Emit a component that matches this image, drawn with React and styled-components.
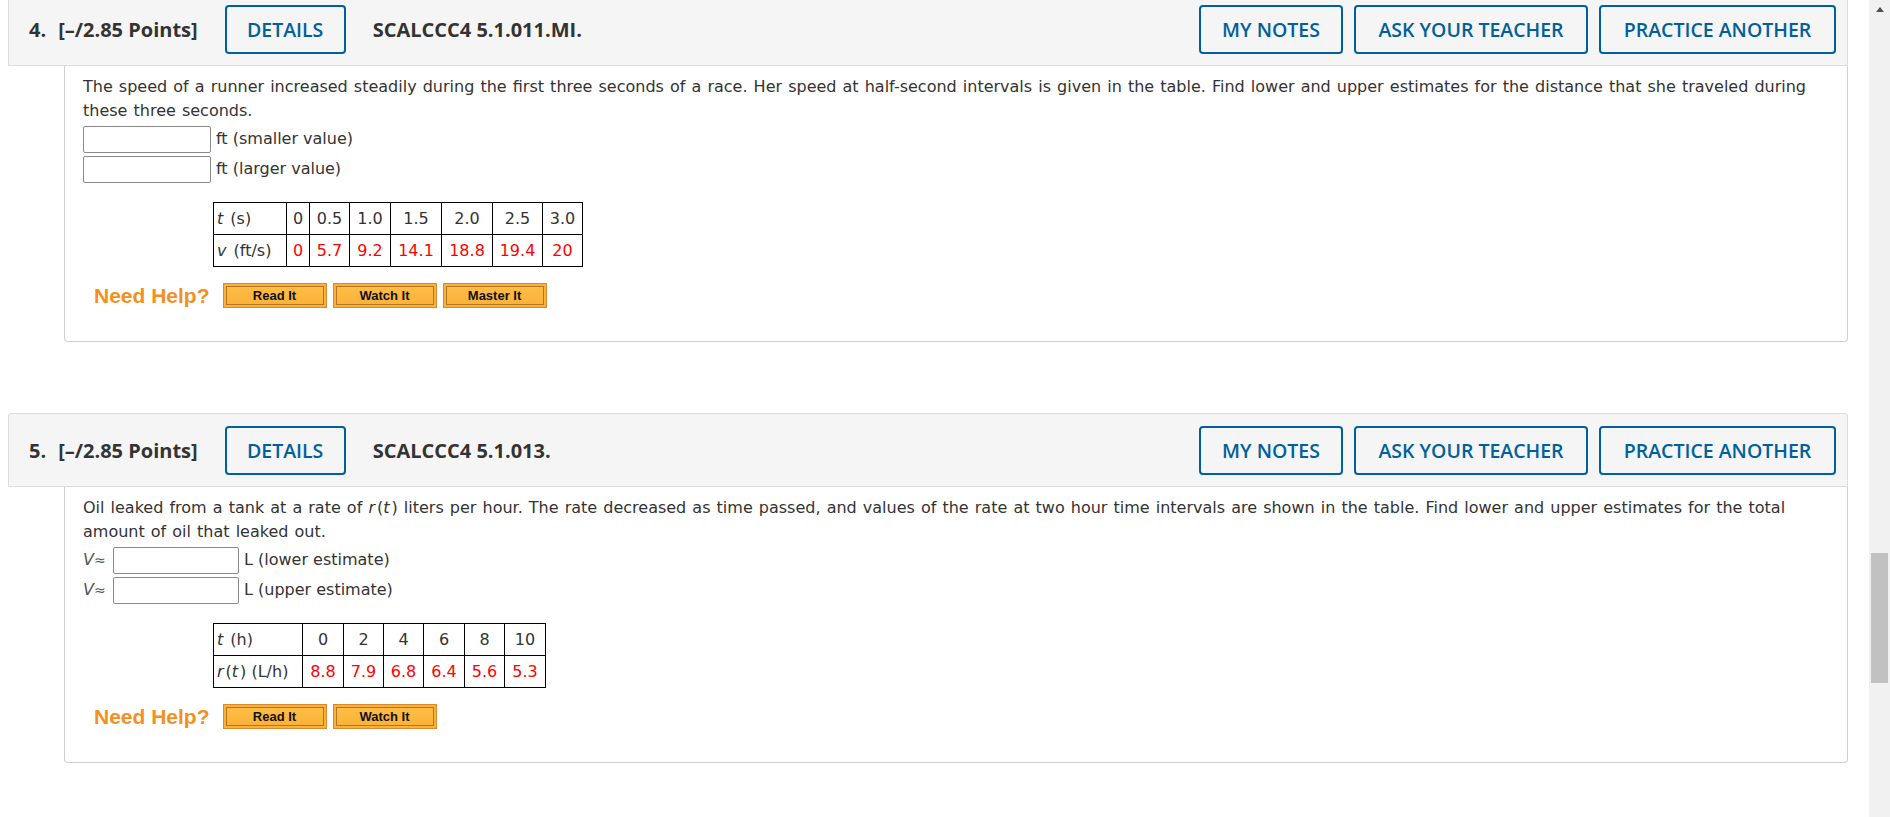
import React from 'react';
import styled, { createGlobalStyle } from 'styled-components';

const GlobalStyle = createGlobalStyle`
  html, body {
    margin: 0;
    padding: 0;
    background: #fff;
    overflow: hidden;
  }
`;

const Viewport = styled.div`
  display: flex;
  height: 100vh;
  overflow: hidden;
`;

const Main = styled.div`
  flex: 1;
  padding: 0 21px 0 8px;
  margin-top: -8px;
`;

const Question = styled.section`
  margin-bottom: 71px;
`;

const Header = styled.div`
  display: flex;
  align-items: center;
  height: 74px;
  box-sizing: border-box;
  padding: 0 11px 0 20px;
  background: #f5f5f5;
  border: 1px solid #dcdcdc;
  border-radius: 3px 3px 0 0;
  font-family: "Open Sans", sans-serif;
  color: #333;
`;

const Title = styled.span`
  font-size: 20px;
  font-weight: 700;
  margin-left: ${p => p.$gap || 0}px;
`;

const Actions = styled.div`
  display: flex;
  gap: 11px;
  margin-left: auto;
`;

const OutlineButton = styled.button`
  width: ${p => p.$w}px;
  height: 49px;
  box-sizing: border-box;
  padding: 0;
  margin: 0 ${p => p.$side ? '27px' : '0'};
  background: #f5f5f5;
  border: 2px solid #00609c;
  border-radius: 4px;
  color: #00609c;
  font-family: "Open Sans", sans-serif;
  font-size: 19.5px;
  font-weight: 600;
  white-space: nowrap;
  cursor: pointer;
`;

const Body = styled.div`
  margin-left: 56px;
  border: 1px solid #cfcfcf;
  border-top: none;
  border-radius: 0 0 4px 4px;
  padding: 9px 18px 33px;
  font-family: "DejaVu Sans", Verdana, sans-serif;
  font-size: 16px;
  line-height: 24px;
  word-spacing: 1px;
  color: #333;
`;

const Prompt = styled.p`
  margin: 0 0 1px;
`;

const Var = styled.i`
  margin-right: 2px;
`;

const AnswerRow = styled.div`
  display: flex;
  align-items: center;
  height: 30px;
  word-spacing: 0;
`;

const Prefix = styled.span`
  width: 30px;
  font-size: 14px;
  color: #555;
  i {
    font-size: 16px;
  }
`;

const AnswerBox = styled.input`
  width: ${p => p.$w || 128}px;
  height: 27px;
  box-sizing: border-box;
  border: 1px solid #8a8a8a;
  border-radius: 2px;
  margin: 0 5px 0 0;
  padding: 0;
`;

const DataTable = styled.table`
  border-collapse: collapse;
  table-layout: fixed;
  margin: 18px 0 0 130px;
  font-size: 16px;
`;

const Cell = styled.td`
  border: 1px solid #000;
  height: 32px;
  padding: 0 3px;
  box-sizing: border-box;
  text-align: ${p => p.$left ? 'left' : 'center'};
  color: ${p => p.$red ? '#ff0000' : '#333'};
  white-space: nowrap;
  word-spacing: 0;
  i {
    color: #333;
  }
`;

const HelpRow = styled.div`
  display: flex;
  align-items: center;
  gap: 6px;
  margin: 16px 0 0 11px;
  word-spacing: 0;
`;

const HelpLabel = styled.span`
  font-family: "Liberation Sans", Arial, sans-serif;
  font-size: 21px;
  font-weight: 700;
  color: #f39020;
  margin-right: 7px;
`;

const HelpButton = styled.button`
  width: 104px;
  height: 25px;
  box-sizing: border-box;
  padding: 2px;
  border: 1px solid #d98a2e;
  background: #fbb03b;
  cursor: pointer;
  span {
    display: flex;
    align-items: center;
    justify-content: center;
    height: 100%;
    box-sizing: border-box;
    border: 1px solid #b5761f;
    background: linear-gradient(#fdbd45, #fbb23a);
    font-family: "Liberation Sans", Arial, sans-serif;
    font-size: 13px;
    font-weight: 700;
    color: #111;
  }
`;

const ScrollTrack = styled.div`
  width: 21px;
  background: #f1f1f1;
  display: flex;
  flex-direction: column;
  align-items: center;
`;

const ScrollArrow = styled.div`
  margin-top: 7px;
  width: 0;
  height: 0;
  border-left: 4px solid transparent;
  border-right: 4px solid transparent;
  border-bottom: 5px solid #505050;
`;

const ScrollThumb = styled.div`
  margin-top: 541px;
  width: 17px;
  height: 130px;
  background: #c1c1c1;
`;

const DataGrid = ({ widths, rows }) => (
    <DataTable style={{ width: widths.reduce((a, b) => a + b, 0) }}>
        <colgroup>
            {widths.map((w, i) => <col key={i} style={{ width: w }} />)}
        </colgroup>
        <tbody>
            {rows.map((row, r) => (
                <tr key={r}>
                    {row.map((c, i) => (
                        <Cell key={i} $left={i === 0} $red={r === 1 && i > 0}>{c}</Cell>
                    ))}
                </tr>
            ))}
        </tbody>
    </DataTable>
);

const QuestionHeader = ({ num, code }) => (
    <Header>
        <Title>{num}.</Title>
        <Title $gap={12}>[–/2.85 Points]</Title>
        <OutlineButton $w={121} $side>DETAILS</OutlineButton>
        <Title>{code}</Title>
        <Actions>
            <OutlineButton $w={144}>MY NOTES</OutlineButton>
            <OutlineButton $w={234}>ASK YOUR TEACHER</OutlineButton>
            <OutlineButton $w={237}>PRACTICE ANOTHER</OutlineButton>
        </Actions>
    </Header>
);

const NeedHelp = ({ items }) => (
    <HelpRow>
        <HelpLabel>Need Help?</HelpLabel>
        {items.map(t => <HelpButton key={t}><span>{t}</span></HelpButton>)}
    </HelpRow>
);

const App = () => {
    return (
        <Viewport>
            <GlobalStyle />
            <Main>
                <Question>
                    <QuestionHeader num={4} code={'SCALCCC4 5.1.011.MI.'} />
                    <Body>
                        <Prompt>The speed of a runner increased steadily during the first three seconds of a race. Her speed at half-second intervals is given in the table. Find lower and upper estimates for the distance that she traveled during these three seconds.</Prompt>
                        <AnswerRow><AnswerBox />ft (smaller value)</AnswerRow>
                        <AnswerRow><AnswerBox />ft (larger value)</AnswerRow>
                        <DataGrid
                            widths={[73, 23, 40, 41, 51, 51, 50, 40]}
                            rows={[
                                [<><Var>t</Var> (s)</>, '0', '0.5', '1.0', '1.5', '2.0', '2.5', '3.0'],
                                [<><Var>v</Var> (ft/s)</>, '0', '5.7', '9.2', '14.1', '18.8', '19.4', '20'],
                            ]}
                        />
                        <NeedHelp items={['Read It', 'Watch It', 'Master It']} />
                    </Body>
                </Question>
                <Question>
                    <QuestionHeader num={5} code={'SCALCCC4 5.1.013.'} />
                    <Body>
                        <Prompt>Oil leaked from a tank at a rate of <Var>r</Var>(<Var>t</Var>) liters per hour. The rate decreased as time passed, and values of the rate at two hour time intervals are shown in the table. Find lower and upper estimates for the total amount of oil that leaked out.</Prompt>
                        <AnswerRow><Prefix><i>V</i>≈</Prefix><AnswerBox $w={126} />L (lower estimate)</AnswerRow>
                        <AnswerRow><Prefix><i>V</i>≈</Prefix><AnswerBox $w={126} />L (upper estimate)</AnswerRow>
                        <DataGrid
                            widths={[89, 41, 40, 40, 41, 40, 41]}
                            rows={[
                                [<><Var>t</Var> (h)</>, '0', '2', '4', '6', '8', '10'],
                                [<><Var>r</Var>(<Var>t</Var>) (L/h)</>, '8.8', '7.9', '6.8', '6.4', '5.6', '5.3'],
                            ]}
                        />
                        <NeedHelp items={['Read It', 'Watch It']} />
                    </Body>
                </Question>
            </Main>
            <ScrollTrack>
                <ScrollArrow />
                <ScrollThumb />
            </ScrollTrack>
        </Viewport>
    );
};

export default App;
